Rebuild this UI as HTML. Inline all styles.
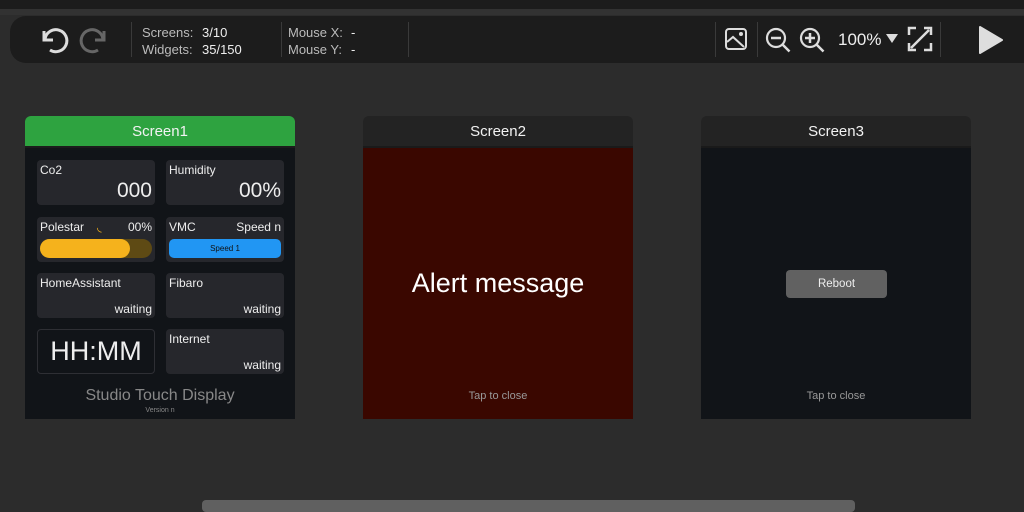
<!DOCTYPE html><html><head><style>
*{margin:0;padding:0;box-sizing:border-box}
body{width:1024px;height:508px;background:#2c2c2c;position:relative;overflow:hidden;font-family:"Liberation Sans",sans-serif;color:#eee}
.a{position:absolute}
.top{left:0;top:0;width:1024px;height:9px;background:#1c1c1c}
.tl{left:0;top:9px;width:1024px;height:6px;background:#323232}
.tb{left:10px;top:16px;width:1030px;height:47px;background:#1c1c1c;border-radius:16px}
.sep{width:1px;background:#3a3a3a;top:22px;height:35px}
.lbl{font-size:13px;color:#bbb}
.val{font-size:13px;color:#eee}
.hdr{height:30px;border-radius:6px 6px 0 0;background:#232323;text-align:center;font-size:15px;line-height:31px;color:#f2f2f2;width:270px}
.bar{height:3px;width:270px;background:#1a1a1a}
.body{width:270px;height:271px}
.w{position:absolute;background:#26272c;border-radius:4px;width:118px;height:45px;font-size:12px}
.w .t{position:absolute;left:3px;top:3px}
.w .v{position:absolute;right:3px;bottom:2px}
</style></head><body>
<div class="a top"></div><div class="a tl"></div>
<div class="a tb"></div>
<svg class="a" style="left:40px;top:24px" width="68" height="32" viewBox="0 0 68 32">
<path d="M4 7v9h9" stroke="#ddd" stroke-width="3" fill="none"/>
<path d="M5 15a11 11 0 1 1 5 11" stroke="#ddd" stroke-width="3" fill="none"/>
<path d="M64 7v9h-9" stroke="#666" stroke-width="3" fill="none"/>
<path d="M63 15a11 11 0 1 0 -5 11" stroke="#666" stroke-width="3" fill="none"/>
</svg>
<div class="a sep" style="left:131px"></div>
<div class="a sep" style="left:281px"></div>
<div class="a sep" style="left:408px"></div>
<div class="a lbl" style="left:142px;top:25px">Screens:</div><div class="a val" style="left:202px;top:25px">3/10</div>
<div class="a lbl" style="left:142px;top:42px">Widgets:</div><div class="a val" style="left:202px;top:42px">35/150</div>
<div class="a lbl" style="left:288px;top:25px">Mouse X:</div><div class="a val" style="left:351px;top:25px">-</div>
<div class="a lbl" style="left:288px;top:42px">Mouse Y:</div><div class="a val" style="left:351px;top:42px">-</div>
<div class="a sep" style="left:715px"></div>
<div class="a sep" style="left:757px"></div>
<div class="a sep" style="left:940px"></div>
<svg class="a" style="left:724px;top:27px" width="24" height="24" viewBox="0 0 24 24"><rect x="2" y="2" width="20" height="20" rx="3" stroke="#ddd" stroke-width="2" fill="none"/><path d="M3 15l6-5 11 10" stroke="#ddd" stroke-width="2" fill="none"/><circle cx="17" cy="7" r="2" fill="#ddd"/></svg>
<svg class="a" style="left:764px;top:26px" width="30" height="28" viewBox="0 0 30 28"><circle cx="12" cy="12" r="9" stroke="#ddd" stroke-width="2.2" fill="none"/><path d="M7 12h10M18.5 18.5l7 7" stroke="#ddd" stroke-width="2.5"/></svg>
<svg class="a" style="left:798px;top:26px" width="30" height="28" viewBox="0 0 30 28"><circle cx="12" cy="12" r="9" stroke="#ddd" stroke-width="2.2" fill="none"/><path d="M7 12h10M12 7v10M18.5 18.5l7 7" stroke="#ddd" stroke-width="2.5"/></svg>
<div class="a" style="left:838px;top:30px;font-size:17px;color:#eee">100%</div>
<div class="a" style="left:886px;top:34px;width:0;height:0;border-left:6px solid transparent;border-right:6px solid transparent;border-top:9px solid #ddd"></div>
<svg class="a" style="left:907px;top:26px" width="26" height="26" viewBox="0 0 26 26"><path d="M2 9V2h7M17 2h7v7M24 17v7h-7M9 24H2v-7M4 22L22 4" stroke="#ddd" stroke-width="2.5" fill="none"/></svg>
<svg class="a" style="left:978px;top:26px" width="26" height="28" viewBox="0 0 26 28"><path d="M2 1L24 14 2 27Z" fill="#ddd" stroke="#ddd" stroke-linejoin="round" stroke-width="2"/></svg>

<!-- Screen1 -->
<div class="a hdr" style="left:25px;top:116px;background:#2ea340">Screen1</div>
<div class="a bar" style="left:25px;top:146px;background:#1c1c1c"></div>
<div class="a body" style="left:25px;top:148px;background:#111418"></div>
<div class="w" style="left:37px;top:160px"><span class="t">Co2</span><span class="v" style="font-size:21px">000</span></div>
<div class="w" style="left:166px;top:160px"><span class="t">Humidity</span><span class="v" style="font-size:21px">00%</span></div>
<div class="w" style="left:37px;top:217px"><span class="t">Polestar</span><span class="a" style="left:60px;top:3px;color:#f5b21c;font-size:12px">◟</span><span class="a" style="right:3px;top:3px">00%</span>
<div class="a" style="left:3px;top:22px;width:112px;height:19px;border-radius:10px;background:#5e4a14"><div style="width:90px;height:19px;border-radius:10px;background:#f5b21c"></div></div></div>
<div class="w" style="left:166px;top:217px"><span class="t">VMC</span><span class="a" style="right:3px;top:3px">Speed n</span>
<div class="a" style="left:3px;top:22px;width:112px;height:19px;border-radius:5px;background:#2196f3;color:#111;font-size:8px;text-align:center;line-height:19px">Speed 1</div></div>
<div class="w" style="left:37px;top:273px"><span class="t">HomeAssistant</span><span class="v">waiting</span></div>
<div class="w" style="left:166px;top:273px"><span class="t">Fibaro</span><span class="v">waiting</span></div>
<div class="w" style="left:37px;top:329px;background:#111418;border:1px solid #2e2f34;font-size:27px;text-align:center;line-height:43px">HH:MM</div>
<div class="w" style="left:166px;top:329px"><span class="t">Internet</span><span class="v">waiting</span></div>
<div class="a" style="left:25px;top:387px;width:270px;text-align:center;font-size:16px;color:#888">Studio Touch Display</div>
<div class="a" style="left:25px;top:407px;width:270px;text-align:center;font-size:7px;color:#888">Version n</div>

<!-- Screen2 -->
<div class="a hdr" style="left:363px;top:116px">Screen2</div>
<div class="a bar" style="left:363px;top:146px"></div>
<div class="a body" style="left:363px;top:148px;background:#3a0700"></div>
<div class="a" style="left:363px;top:268px;width:270px;text-align:center;font-size:27px;color:#fff">Alert message</div>
<div class="a" style="left:363px;top:390px;width:270px;text-align:center;font-size:11px;color:#999">Tap to close</div>

<!-- Screen3 -->
<div class="a hdr" style="left:701px;top:116px">Screen3</div>
<div class="a bar" style="left:701px;top:146px"></div>
<div class="a body" style="left:701px;top:148px;background:#111418"></div>
<div class="a" style="left:786px;top:270px;width:101px;height:28px;border-radius:4px;background:#616161;text-align:center;line-height:28px;font-size:11.5px;color:#eee">Reboot</div>
<div class="a" style="left:701px;top:390px;width:270px;text-align:center;font-size:11px;color:#999">Tap to close</div>

<div class="a" style="left:202px;top:500px;width:653px;height:12px;border-radius:4px;background:#606060"></div>
</body></html>
